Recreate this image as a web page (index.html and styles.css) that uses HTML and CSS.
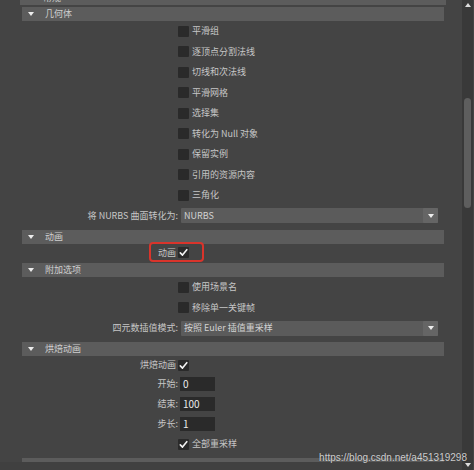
FILE: index.html
```html
<!DOCTYPE html>
<html lang="zh-CN">
<head>
<meta charset="utf-8">
<title>导出选项</title>
<link rel="stylesheet" href="styles.css">
</head>
<body>
<div class="window">
  <div class="panel">
    <div class="hdr hdr-top"><span class="tri"></span><span>常规</span></div>

    <div class="hdr hdr-geo"><span class="tri"></span><span>几何体</span></div>
    <div class="body body-geo">
      <div class="row"><div class="lbl"></div><div class="ctl"><span class="cb"></span><span class="cb-txt">平滑组</span></div></div>
      <div class="row"><div class="lbl"></div><div class="ctl"><span class="cb"></span><span class="cb-txt">逐顶点分割法线</span></div></div>
      <div class="row"><div class="lbl"></div><div class="ctl"><span class="cb"></span><span class="cb-txt">切线和次法线</span></div></div>
      <div class="row"><div class="lbl"></div><div class="ctl"><span class="cb"></span><span class="cb-txt">平滑网格</span></div></div>
      <div class="row"><div class="lbl"></div><div class="ctl"><span class="cb"></span><span class="cb-txt">选择集</span></div></div>
      <div class="row"><div class="lbl"></div><div class="ctl"><span class="cb"></span><span class="cb-txt">转化为 Null 对象</span></div></div>
      <div class="row"><div class="lbl"></div><div class="ctl"><span class="cb"></span><span class="cb-txt">保留实例</span></div></div>
      <div class="row"><div class="lbl"></div><div class="ctl"><span class="cb"></span><span class="cb-txt">引用的资源内容</span></div></div>
      <div class="row"><div class="lbl"></div><div class="ctl"><span class="cb"></span><span class="cb-txt">三角化</span></div></div>
      <div class="row"><div class="lbl lbl-dd">将 NURBS 曲面转化为:</div><div class="ctl">
        <div class="dd"><span class="dd-val">NURBS</span><span class="dd-btn"><span class="dd-tri"></span></span></div>
      </div></div>
    </div>

    <div class="hdr"><span class="tri"></span><span>动画</span></div>
    <div class="body body-anim">
      <div class="row row-anim"><div class="lbl">动画</div><div class="ctl">
        <svg class="cb" viewBox="0 0 11 11"><path d="M2.3 5.9 L4.5 8.1 L8.8 2.7" fill="none" stroke="#f2f2f2" stroke-width="1.6" stroke-linecap="round" stroke-linejoin="round"/></svg>
      </div>
      <div class="mark"></div></div>
    </div>

    <div class="hdr"><span class="tri"></span><span>附加选项</span></div>
    <div class="body body-extra">
      <div class="row"><div class="lbl"></div><div class="ctl"><span class="cb"></span><span class="cb-txt">使用场景名</span></div></div>
      <div class="row"><div class="lbl"></div><div class="ctl"><span class="cb"></span><span class="cb-txt">移除单一关键帧</span></div></div>
      <div class="row"><div class="lbl lbl-dd">四元数插值模式:</div><div class="ctl">
        <div class="dd"><span class="dd-val">按照 Euler 插值重采样</span><span class="dd-btn"><span class="dd-tri"></span></span></div>
      </div></div>
    </div>

    <div class="hdr"><span class="tri"></span><span>烘焙动画</span></div>
    <div class="body body-bake">
      <div class="row row-first"><div class="lbl">烘焙动画</div><div class="ctl">
        <svg class="cb" viewBox="0 0 11 11"><path d="M2.3 5.9 L4.5 8.1 L8.8 2.7" fill="none" stroke="#f2f2f2" stroke-width="1.6" stroke-linecap="round" stroke-linejoin="round"/></svg>
      </div></div>
      <div class="row row-20"><div class="lbl lbl-in">开始:</div><div class="ctl"><span class="num">0</span></div></div>
      <div class="row row-20"><div class="lbl lbl-in">结束:</div><div class="ctl"><span class="num">100</span></div></div>
      <div class="row row-20"><div class="lbl lbl-in">步长:</div><div class="ctl"><span class="num">1</span></div></div>
      <div class="row row-20"><div class="lbl"></div><div class="ctl">
        <svg class="cb cb-ok" viewBox="0 0 11 11"><path d="M2.3 5.9 L4.5 8.1 L8.8 2.7" fill="none" stroke="#f2f2f2" stroke-width="1.6" stroke-linecap="round" stroke-linejoin="round"/></svg>
        <span class="cb-txt">全部重采样</span></div></div>
    </div>
    <div class="hdr hdr-bottom"></div>
    <div class="foot"></div>
  </div>

  <div class="scroll">
    <span class="sb-up"></span>
    <span class="sb-thumb"></span>
    <span class="sb-down"></span>
  </div>

  <div class="watermark">https://blog.csdn.net/a451319298</div>
</div>
</body>
</html>
```

FILE: styles.css
```css
* { box-sizing: border-box; }

html, body {
  margin: 0;
  padding: 0;
}

body {
  width: 474px;
  height: 470px;
  overflow: hidden;
  background: #444444;
  font-family: "Noto Sans CJK SC", "Noto Sans", sans-serif;
  font-size: 9px;
  line-height: 12px;
  color: #c6c6c6;
}

.window {
  position: relative;
  display: flex;
  height: 470px;
}

.panel {
  flex: 0 0 462px;
  display: flex;
  flex-direction: column;
  overflow: hidden;
}

/* section headers */
.hdr {
  flex: none;
  display: flex;
  align-items: center;
  height: 14px;
  margin: 0 18px 0 22px;
  background: #5c5c5c;
  color: #cfcfcf;
  white-space: nowrap;
}

.hdr-top {
  margin: -9px 16px 0 20px;
}

.hdr-geo {
  margin-top: 2px;
}

.hdr-bottom {
  height: 4px;
  margin-top: 4px;
}

.tri {
  flex: none;
  width: 0;
  height: 0;
  margin-left: 6px;
  margin-right: 11px;
  border-left: 3px solid transparent;
  border-right: 3px solid transparent;
  border-top: 4px solid #ececec;
}

/* bodies */
.body {
  flex: none;
  display: flex;
  flex-direction: column;
}

.body-geo { padding-bottom: 4px; }
.body-anim { padding-bottom: 2px; }
.body-extra { padding-bottom: 3.5px; }

.row {
  position: relative;
  display: flex;
  align-items: center;
  height: 20.5px;
  flex: none;
}

.row-anim { height: 17px; }
.row-first { height: 18px; }
.row-20 { height: 20px; }

.lbl {
  flex: 0 0 178px;
  text-align: right;
  padding-right: 2px;
  white-space: nowrap;
}

.lbl-dd { padding-right: 0; }
.lbl-in { padding-right: 0; }

.ctl {
  display: flex;
  align-items: center;
  white-space: nowrap;
}

.cb {
  flex: none;
  display: block;
  width: 11px;
  height: 11px;
  background: #2a2a2a;
  border-radius: 1px;
}

.cb-txt {
  margin-left: 3px;
}

/* dropdowns */
.dd {
  display: flex;
  align-items: center;
  width: 257px;
  height: 15px;
  margin-left: 3px;
  background: #5b5b5b;
  border-radius: 1px;
  color: #d2d2d2;
}

.dd-val {
  flex: 1;
  padding-left: 3px;
}

.dd-btn {
  flex: 0 0 15px;
  height: 15px;
  display: flex;
  align-items: center;
  justify-content: center;
  background: #656565;
  border-radius: 1px;
}

.dd-tri {
  width: 0;
  height: 0;
  border-left: 3px solid transparent;
  border-right: 3px solid transparent;
  border-top: 4px solid #ededed;
}

/* number inputs */
.num {
  display: block;
  width: 35px;
  height: 14px;
  margin-left: 2px;
  padding-left: 3px;
  background: #2a2a2a;
  color: #ececec;
  font-size: 10px;
  line-height: 14px;
}

/* red annotation box over the 动画 row */
.mark {
  position: absolute;
  left: 149px;
  top: -2px;
  width: 55px;
  height: 20px;
  border: 2px solid #d9342b;
  border-radius: 4px;
}

.foot {
  flex: 1;
  background: #404040;
}

/* scrollbar */
.scroll {
  flex: 0 0 11px;
  display: flex;
  flex-direction: column;
  align-items: center;
  background: #393939;
}

.sb-up {
  margin-top: 3px;
  width: 0;
  height: 0;
  border-left: 3px solid transparent;
  border-right: 3px solid transparent;
  border-bottom: 4px solid #dddddd;
}

.sb-thumb {
  margin-top: 91px;
  width: 7px;
  height: 110px;
  border-radius: 4px;
  background: #5e5e5e;
}

.sb-down {
  margin-top: auto;
  margin-bottom: 3px;
  width: 0;
  height: 0;
  border-left: 3px solid transparent;
  border-right: 3px solid transparent;
  border-top: 4px solid #dddddd;
}

/* watermark overlay */
.watermark {
  position: absolute;
  right: 7px;
  bottom: 6px;
  font-family: "Liberation Sans", Arial, sans-serif;
  font-size: 10px;
  line-height: 12px;
  color: rgba(236, 236, 236, 0.85);
  text-shadow: 0 0 1px rgba(0, 0, 0, 0.4);
  white-space: nowrap;
}
```
